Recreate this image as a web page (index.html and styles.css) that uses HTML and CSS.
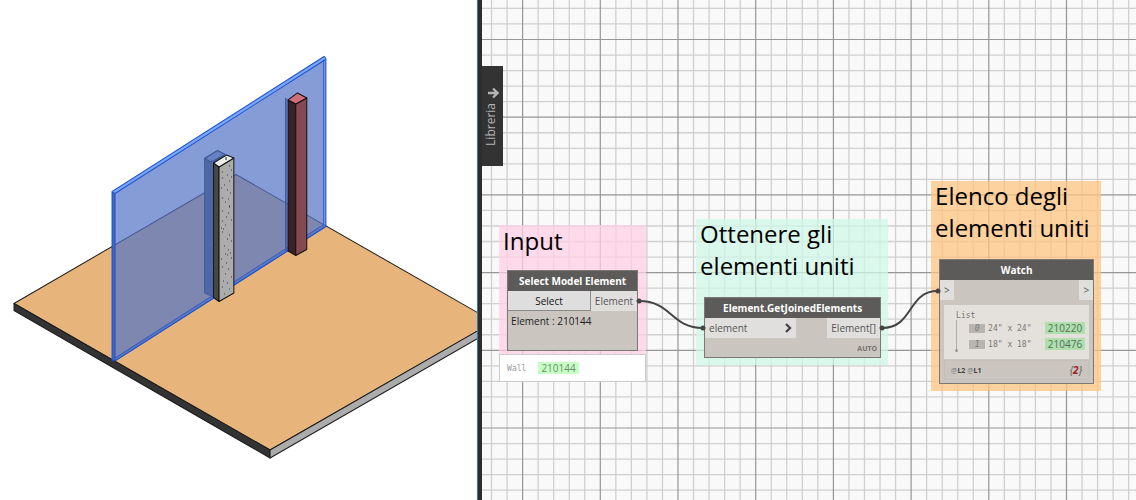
FILE: index.html
```html
<!DOCTYPE html>
<html lang="it">
<head>
    <meta charset="UTF-8">
    <title>Element.GetJoinedElements</title>
    <link rel="stylesheet" href="styles.css">
</head>
<body>
    <div class="app">
        <div class="model-view">
            <svg class="model" viewBox="0 0 477 500" preserveAspectRatio="xMinYMid slice" role="img" aria-label="Modello 3D">
                <!-- floor -->
                <g stroke="#1c1c1c" stroke-linejoin="round">
                    <polygon points="14,303.5 236,174.5 500,325.5 500,318 270,450" fill="#e7b57b"/>
                    <polygon points="14,303.5 270,450 270,458 14,310.5" fill="#333"/>
                    <polygon points="270,450 500,318 500,325.5 270,458" fill="#acacac"/>
                </g>

                <!-- wall -->
                <polygon points="112,192 324,57 326,59 326,226 115,360.5 112,360" fill="rgba(83,115,197,.71)"/>
                <path d="M113.500 192.500L325 58" stroke="#79a8ff" stroke-width="3"/>
                <path d="M113.500 193V360" stroke="#4168bd" stroke-width="3"/>
                <path d="M115 359.500L325 226" stroke="#5b78bd" stroke-width="3"/>
                <g fill="none" stroke="#1e50cf">
                    <path d="M112 360V191.500L324 56.500L325.800 58.500V226.500L115 361z"/>
                    <path d="M112 192L115 193.500V360M115 193.500L325.500 59.500"/>
                    <path d="M323.500 60V224.500L115 358" stroke-width=".8"/>
                </g>

                <!-- concrete column -->
                <polygon points="204.500,158.500 217.500,150.500 225,154.500 213.500,163 213.500,297 204.500,293" fill="#4d68a4" stroke="#3b5796" stroke-width=".8"/>
                <polygon points="204.500,158.500 217.500,150.500 225,154.500 211,162" fill="#6782c2" stroke="#3b5796"/>
                <g stroke="#151515" stroke-linejoin="round">
                    <polygon points="213.500,163 219,167 219,301.500 213.500,297.500" fill="#4a4646"/>
                    <polygon points="219,167 233.800,158 233.800,293 219,301.500" fill="#acacac"/>
                    <polygon points="213.500,163 226.500,155 233.800,158 219,167" fill="#ececec"/>
                </g>
                <path d="M226 157v3M229 166h1M222 172h1M231 170h1M227 175h1M222 178h1M229 181h1M224 185h1M221 188h1M231 177h1M227 190h1M230 193h1M222 198h1M228 199h1M225 202h1M229 206h1M222 211h1M228 213h1M226 217h1M229 207h1M222 221h1M231 220h1M225 225h1M221 228h1M223 229h1M229 235h1M227 239h1M222 232h1M231 241h1M224 246h1M228 250h1M225 254h1M227 255h1M230 253h1M221 259h1M231 258h1M226 263h1M222 267h1M228 269h1M225 274h1M231 277h1M223 281h1M222 287h1M227 283h1M229 289h1M224 294h1M215 184h1M216 215h1M215 245h1M217 205h1M215 268h1M216 288h1" stroke="#333" fill="none"/>

                <!-- steel column -->
                <path d="M285.800 98V251" stroke="#3b5fae" stroke-width="1.800"/>
                <g stroke="#180d10" stroke-linejoin="round">
                    <polygon points="288,100 295.700,104 295.700,255.500 288,251" fill="#3a2226"/>
                    <polygon points="295.700,104 306.700,98 306.700,249.500 295.700,255.500" fill="#834a51"/>
                    <polygon points="288,100 297.500,93 306.700,98 295.700,104" fill="#cf6f79"/>
                </g>
            </svg>
        </div>

        <div class="workspace">
            <svg class="layer" id="grid"></svg>

            <button class="library-tab" type="button">
                <svg width="12" height="12" viewBox="0 0 12 12"><path d="M1 6h9M6 1.500l4.500 4.500l-4.500 4.500" fill="none" stroke="#b4b4b4" stroke-width="2.300"/></svg>
                <span>Libreria</span>
            </button>

            <div class="group group-input"><h2>Input</h2></div>
            <div class="group group-joined"><h2>Ottenere gli<br>elementi uniti</h2></div>
            <div class="group group-list"><h2>Elenco degli<br>elementi uniti</h2></div>

            <div class="node node-select">
                <h3>Select Model Element</h3>
                <div class="ports">
                    <button class="select-button" type="button">Select</button>
                    <span class="port">Element</span>
                </div>
                <p>Element : 210144</p>
            </div>
            <div class="preview">
                <span class="mono">Wall</span>
                <a class="id" href="#">210144</a>
            </div>

            <div class="node node-joined">
                <h3>Element.GetJoinedElements</h3>
                <div class="ports">
                    <span class="port port-in">element
                        <svg width="7" height="10" viewBox="0 0 7 10"><path d="M1 1l4 4l-4 4" fill="none" stroke="#444" stroke-width="2.300"/></svg>
                    </span>
                    <span class="port">Element[]</span>
                </div>
                <div class="lacing">AUTO</div>
            </div>

            <div class="node node-watch">
                <h3>Watch</h3>
                <div class="ports">
                    <span class="port">&gt;</span>
                    <span class="port">&gt;</span>
                </div>
                <div class="watch-list mono">
                    <div>List</div>
                    <ul>
                        <li><i>0</i><span>24" x 24"</span><a class="id" href="#">210220</a></li>
                        <li><i>1</i><span>18" x 18"</span><a class="id" href="#">210476</a></li>
                    </ul>
                </div>
                <div class="watch-footer">
                    <span class="levels"><span>@</span>L2 <span>@</span>L1</span>
                    <span class="count">{<b>2</b>}</span>
                </div>
            </div>

            <svg class="layer wires">
                <g fill="none" stroke="#444" stroke-width="2">
                    <path d="M157 301C190 301 189 328 221 328"/>
                    <path d="M400 328C432 328 425 291 456 291"/>
                </g>
                <g fill="#444">
                    <circle cx="157" cy="301" r="2.500"/>
                    <circle cx="221" cy="328" r="2.500"/>
                    <circle cx="400" cy="328" r="2.500"/>
                    <circle cx="456" cy="291" r="2.500"/>
                </g>
            </svg>
        </div>
    </div>

    <script src="grid.js"></script>
</body>
</html>
```

FILE: styles.css
```css
* {
    box-sizing: border-box;
}

body {
    margin: 0;
    font-family: "Open Sans", sans-serif;
    background-color: #fff;
}

h2, h3, p, ul {
    margin: 0;
    padding: 0;
}

a {
    text-decoration: none;
}

.app {
    display: flex;
    height: 100vh;
    overflow: hidden;
}

.model-view {
    width: calc(42% + 1px);
    border-right: 1px solid #2a7ab8;
}

.model {
    display: block;
    width: 100%;
    height: 100%;
}

.workspace {
    position: relative;
    flex: 1;
    overflow: hidden;
    background-color: #f9f9f9;
    border-left: 4px solid #2d2d2d;
}

.layer {
    position: absolute;
    top: 0;
    left: 0;
    width: 100%;
    height: 100%;
}

.wires {
    pointer-events: none;
}

.grid-minor {
    stroke: #d0d0d0;
    stroke-width: 1.3;
}

.grid-major {
    stroke: #969696;
    stroke-width: 1.2;
}

/* library tab */
.library-tab {
    position: absolute;
    top: 66px;
    left: 0;
    width: 21px;
    height: 100px;
    display: flex;
    flex-direction: column;
    align-items: center;
    justify-content: center;
    gap: 4px;
    padding: 0;
    border: none;
    background-color: #333;
    color: #b4b4b4;
    font: 12px "Open Sans", sans-serif;
}

.library-tab span {
    margin-right: 4px;
    writing-mode: vertical-rl;
    transform: rotate(180deg);
}

/* groups */
.group {
    position: absolute;
    padding: 0 4px;
}

.group h2 {
    color: #000;
    font-size: 24px;
    font-weight: normal;
    line-height: 32px;
    white-space: nowrap;
}

.group-input {
    left: 17px;
    top: 225px;
    width: 147px;
    height: 129px;
    background-color: rgba(255, 207, 228, 0.75);
}

.group-joined {
    left: 214px;
    top: 219px;
    width: 192px;
    height: 146px;
    background-color: rgba(207, 247, 230, 0.75);
}

.group-list {
    left: 449px;
    top: 181px;
    width: 170px;
    height: 210px;
    background-color: rgba(255, 196, 128, 0.75);
}

.group-joined h2,
.group-list h2 {
    margin-top: -1px;
}

/* nodes */
.node {
    position: absolute;
    border: 1px solid #7b7875;
    background-color: #cac5bf;
    color: #222;
    font-size: 10px;
}

.node h3 {
    height: 20px;
    background-color: #5c5b59;
    color: #fff;
    font-size: 10px;
    line-height: 20px;
    text-align: center;
}

.ports {
    display: flex;
    justify-content: space-between;
    height: 20px;
}

.port {
    display: flex;
    align-items: center;
    justify-content: space-between;
    padding: 0 4px;
    background-color: #e1dfdd;
    color: #555;
}

.node-select {
    left: 25px;
    top: 270px;
    width: 131px;
    height: 81px;
}

.node-select p {
    padding: 3px;
}

.select-button {
    flex: 1;
    padding: 0;
    border: 1px solid #8b8b8b;
    border-width: 0 1px 1px 0;
    background-color: #dedede;
    color: #111;
    font: 10px "Open Sans", sans-serif;
}

.preview {
    position: absolute;
    left: 17px;
    top: 354px;
    width: 147px;
    height: 28px;
    display: flex;
    align-items: center;
    gap: 12px;
    padding: 0 7px;
    border: 1px solid #ccc;
    background-color: #fff;
    color: #999;
}

.mono {
    font-family: "DejaVu Sans Mono", monospace;
    font-size: 8px;
}

.id {
    padding: 0 3px;
    background-color: #c6ffc6;
    color: #6d8d6d;
    font: 10px/12px "Open Sans", sans-serif;
}

.node-joined {
    left: 222px;
    top: 297px;
    width: 177px;
    height: 61px;
}

.port-in {
    width: 91px;
}

.lacing {
    padding: 6px 3px;
    color: #77736f;
    font-size: 7px;
    font-weight: bold;
    text-align: right;
}

.node-watch {
    left: 457px;
    top: 259px;
    width: 155px;
    height: 125px;
}

.watch-list {
    margin: 5px 4px 0;
    padding: 6px 4px 0 12px;
    height: 54px;
    background-color: #e4e1dd;
    color: #777;
}

.watch-list ul {
    position: relative;
    border-left: 1px solid #aaa;
    list-style: none;
}

/* end of the tree line */
.watch-list ul::after {
    content: "";
    position: absolute;
    left: -2px;
    bottom: 0;
    width: 3px;
    height: 3px;
    border-radius: 50%;
    background-color: #999;
}

.watch-list li {
    display: flex;
    align-items: center;
    height: 16px;
    padding-left: 12px;
}

.watch-list li i {
    width: 16px;
    margin-right: 3px;
    height: 9px;
    background-color: #b8b5b1;
    line-height: 10px;
    text-align: center;
}

.watch-list .id {
    margin-left: auto;
    background-color: #aedfae;
    color: #576f57;
}

.watch-footer {
    display: flex;
    align-items: center;
    justify-content: space-between;
    margin: 1px 4px 0;
    padding: 0 6px;
    height: 20px;
    border: 1px solid #c5bfb8;
}

.levels {
    color: #444;
    font-size: 7px;
    font-weight: bold;
}

.levels span {
    color: #777;
    font-weight: normal;
}

.count {
    color: #555;
    font-style: italic;
}

.count b {
    color: #a01c1c;
}
```

FILE: grid.js
```js
const grid = document.getElementById('grid');
const step = 15.54;
const originX = 40.6;
const originY = 39.5;

function drawLines(cls, every) {
    let d = '';
    for (let i = -5; i * step + originX < grid.clientWidth; i++) {
        if ((i % 5 === 0) === every) d += 'M' + (originX + i * step) + ' 0V' + grid.clientHeight;
    }
    for (let i = -5; i * step + originY < grid.clientHeight; i++) {
        if ((i % 5 === 0) === every) d += 'M0 ' + (originY + i * step) + 'H' + grid.clientWidth;
    }
    const path = document.createElementNS('http://www.w3.org/2000/svg', 'path');
    path.setAttribute('class', cls);
    path.setAttribute('d', d);
    grid.appendChild(path);
}

function drawGrid() {
    grid.innerHTML = '';
    drawLines('grid-minor', false);
    drawLines('grid-major', true);
}

window.addEventListener('resize', drawGrid);
drawGrid();
```
